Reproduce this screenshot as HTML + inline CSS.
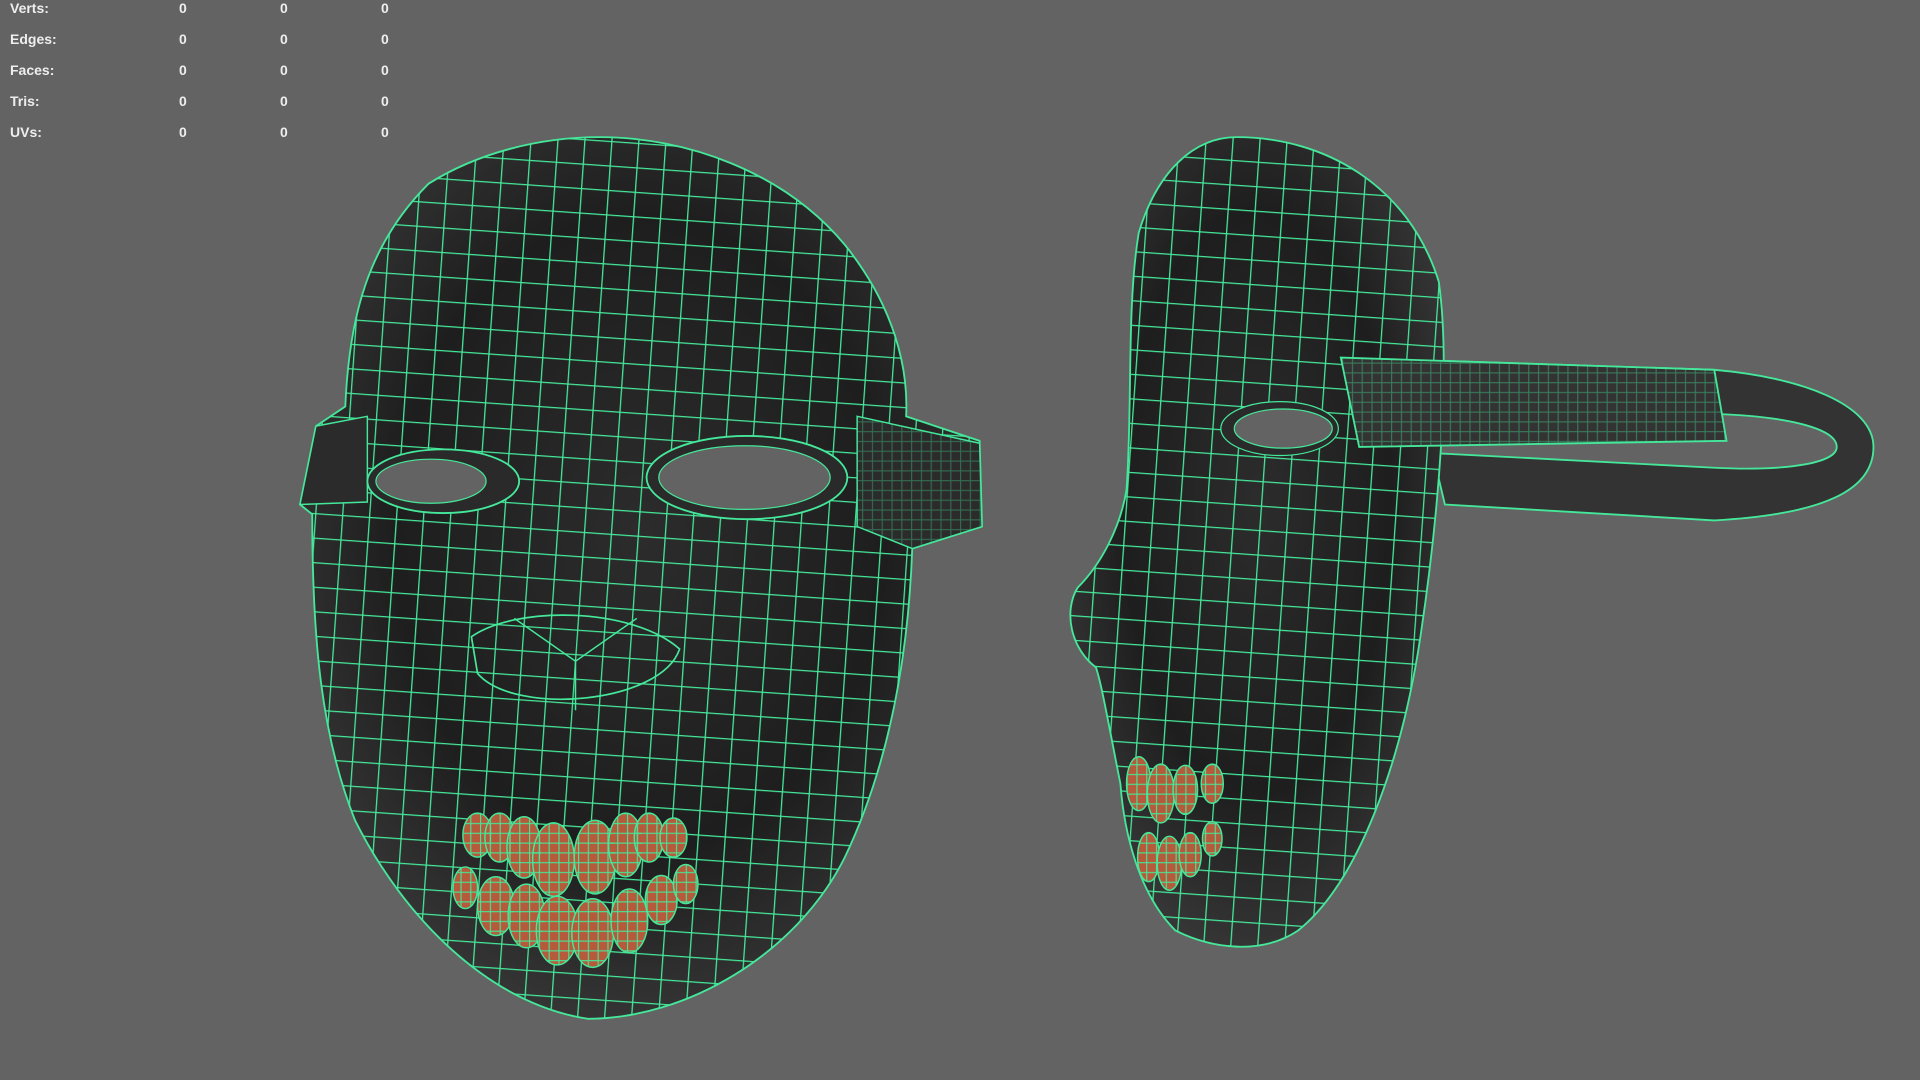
<!DOCTYPE html>
<html><head><meta charset="utf-8"><style>
html,body{margin:0;padding:0;width:1920px;height:1080px;overflow:hidden;background:#636363}
.t{position:absolute;font:bold 14px "Liberation Sans",sans-serif;color:#eee}
svg{position:absolute;left:0;top:0}
</style></head><body>
<svg width="1920" height="1080" viewBox="0 0 1568 882" preserveAspectRatio="none">
<defs>
<pattern id="g" width="22" height="20" patternUnits="userSpaceOnUse" patternTransform="rotate(4)">
<path d="M0 0.5H22M0.5 0V20" stroke="#45e89a" stroke-width="1.1"/>
</pattern>
<pattern id="g2" width="8" height="8" patternUnits="userSpaceOnUse">
<path d="M0 0.5H8M0.5 0V8" stroke="#45e89a" stroke-width="0.9"/>
</pattern>
<radialGradient id="d" cx="50%" cy="45%" r="60%">
<stop offset="0" stop-color="#2c2c2c"/><stop offset="0.6" stop-color="#1e1e1e"/><stop offset="1" stop-color="#3a3a3a"/>
</radialGradient>
<g id="teethL">
<ellipse cx="390" cy="682" rx="12" ry="18"/><ellipse cx="408" cy="684" rx="12" ry="20"/><ellipse cx="428" cy="692" rx="14" ry="25"/>
<ellipse cx="452" cy="702" rx="17" ry="30"/><ellipse cx="486" cy="700" rx="17" ry="30"/><ellipse cx="511" cy="690" rx="14" ry="26"/>
<ellipse cx="530" cy="684" rx="12" ry="20"/><ellipse cx="550" cy="684" rx="11" ry="16"/>
<ellipse cx="380" cy="725" rx="10" ry="17"/><ellipse cx="405" cy="740" rx="15" ry="24"/><ellipse cx="430" cy="748" rx="15" ry="26"/>
<ellipse cx="455" cy="760" rx="17" ry="28"/><ellipse cx="484" cy="762" rx="17" ry="28"/><ellipse cx="514" cy="752" rx="15" ry="26"/>
<ellipse cx="540" cy="735" rx="13" ry="20"/><ellipse cx="560" cy="722" rx="10" ry="16"/>
</g>
<g id="teethR">
<ellipse cx="930" cy="640" rx="10" ry="22"/><ellipse cx="948" cy="648" rx="11" ry="24"/><ellipse cx="968" cy="645" rx="10" ry="20"/><ellipse cx="990" cy="640" rx="9" ry="16"/>
<ellipse cx="938" cy="700" rx="9" ry="20"/><ellipse cx="955" cy="705" rx="10" ry="22"/><ellipse cx="972" cy="698" rx="9" ry="18"/><ellipse cx="990" cy="685" rx="8" ry="14"/>
</g>
</defs>
<!-- left mask -->
<path d="M490 112 C560 112 640 140 690 200 C730 250 742 300 740 340 L800 360 L802 430 L745 448 C742 530 728 620 690 700 C650 780 560 832 480 832 C400 820 330 750 290 670 C262 600 255 520 255 420 L245 412 L258 348 L282 332 C285 260 300 200 350 150 C390 125 440 112 490 112Z" fill="url(#d)" stroke="#45e89a" stroke-width="1.5"/>
<path d="M490 112 C560 112 640 140 690 200 C730 250 742 300 740 340 L800 360 L802 430 L745 448 C742 530 728 620 690 700 C650 780 560 832 480 832 C400 820 330 750 290 670 C262 600 255 520 255 420 L245 412 L258 348 L282 332 C285 260 300 200 350 150 C390 125 440 112 490 112Z" fill="url(#g)"/>
<path d="M700 340 L800 362 L802 430 L745 448 L700 430Z" fill="#2b2b2b" stroke="#45e89a" stroke-width="1.2"/>
<path d="M700 340 L800 362 L802 430 L745 448 L700 430Z" fill="url(#g2)" opacity="0.35"/>
<path d="M258 348 L300 340 L300 410 L245 412Z" fill="#2b2b2b" stroke="#45e89a" stroke-width="1.2"/>
<ellipse cx="362" cy="393" rx="62" ry="26" fill="#2a2a2a" stroke="#45e89a" stroke-width="1.5"/>
<ellipse cx="352" cy="393" rx="45" ry="18" fill="#636363" stroke="#45e89a"/>
<ellipse cx="610" cy="390" rx="82" ry="34" fill="#2a2a2a" stroke="#45e89a" stroke-width="1.5"/>
<ellipse cx="608" cy="390" rx="70" ry="26" fill="#636363" stroke="#45e89a"/>
<path d="M385 520 C420 495 515 495 555 530 C540 575 420 585 390 550Z" fill="none" stroke="#45e89a" stroke-width="1.4"/>
<path d="M420 505 L470 540 L520 505 M470 540 L470 580" fill="none" stroke="#45e89a" stroke-width="1.2"/>
<use href="#teethL" fill="#b55a3a" stroke="#45e89a" stroke-width="1.2"/>
<use href="#teethL" fill="url(#g2)"/>
<!-- right mask strap back -->
<path d="M1095 292 L1400 302 C1470 308 1530 330 1530 365 C1530 400 1490 420 1400 425 L1180 412 L1170 370 L1400 382 C1460 385 1500 378 1500 365 C1500 350 1460 340 1400 338 L1110 365Z" fill="#333" stroke="#45e89a" stroke-width="1.5"/>
<path d="M1010 112 C1080 112 1150 150 1175 230 C1185 300 1175 420 1160 520 C1145 620 1110 720 1060 760 C1030 780 990 775 960 760 C930 730 918 680 915 640 C905 590 900 560 895 545 C875 530 868 500 880 480 C900 460 915 430 920 400 C925 330 920 250 930 190 C945 140 975 112 1010 112Z" fill="url(#d)" stroke="#45e89a" stroke-width="1.5"/>
<path d="M1010 112 C1080 112 1150 150 1175 230 C1185 300 1175 420 1160 520 C1145 620 1110 720 1060 760 C1030 780 990 775 960 760 C930 730 918 680 915 640 C905 590 900 560 895 545 C875 530 868 500 880 480 C900 460 915 430 920 400 C925 330 920 250 930 190 C945 140 975 112 1010 112Z" fill="url(#g)"/>
<path d="M1095 292 L1400 302 L1410 360 L1110 365Z" fill="#333" stroke="#45e89a" stroke-width="1.5"/>
<path d="M1095 292 L1400 302 L1410 360 L1110 365Z" fill="url(#g2)" opacity="0.4"/>
<ellipse cx="1045" cy="350" rx="48" ry="22" fill="#2a2a2a" stroke="#45e89a"/>
<ellipse cx="1048" cy="350" rx="40" ry="16" fill="#636363" stroke="#45e89a"/>
<use href="#teethR" fill="#b55a3a" stroke="#45e89a" stroke-width="1.2"/>
<use href="#teethR" fill="url(#g2)"/>
</svg>
<div class="t" style="left:10px;top:0px">Verts:</div><div class="t" style="left:10px;top:31px">Edges:</div><div class="t" style="left:10px;top:62px">Faces:</div><div class="t" style="left:10px;top:93px">Tris:</div><div class="t" style="left:10px;top:124px">UVs:</div>
<div class="t" style="left:179px;top:0">0</div><div class="t" style="left:280px;top:0">0</div><div class="t" style="left:381px;top:0">0</div>
<div class="t" style="left:179px;top:31px">0</div><div class="t" style="left:280px;top:31px">0</div><div class="t" style="left:381px;top:31px">0</div>
<div class="t" style="left:179px;top:62px">0</div><div class="t" style="left:280px;top:62px">0</div><div class="t" style="left:381px;top:62px">0</div>
<div class="t" style="left:179px;top:93px">0</div><div class="t" style="left:280px;top:93px">0</div><div class="t" style="left:381px;top:93px">0</div>
<div class="t" style="left:179px;top:124px">0</div><div class="t" style="left:280px;top:124px">0</div><div class="t" style="left:381px;top:124px">0</div>
</body></html>
